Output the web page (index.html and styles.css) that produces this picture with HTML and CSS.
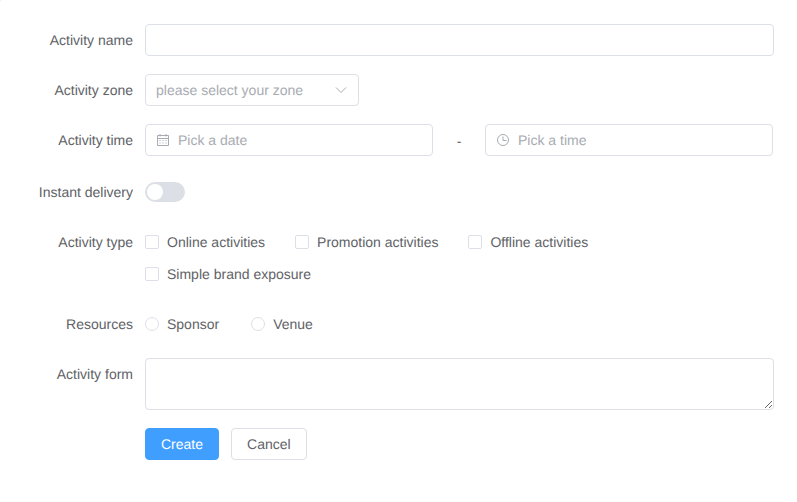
FILE: index.html
```html
<!DOCTYPE html>
<html lang="en">
<head>
<meta charset="utf-8">
<title>Activity form</title>
<link rel="stylesheet" href="styles.css">
</head>
<body>
<form class="form">
  <div class="row">
    <label class="label">Activity name</label>
    <div class="control"><div class="field"><input class="input" type="text"></div></div>
  </div>
  <div class="row">
    <label class="label">Activity zone</label>
    <div class="control">
      <div class="field field-select">
        <input class="input" type="text" placeholder="please select your zone" readonly>
        <svg class="chevron" viewBox="0 0 12 12" width="12" height="12"><path d="M1 3.500 6 8.500l5-5" fill="none" stroke="#a8abb2" stroke-width="1"/></svg>
      </div>
    </div>
  </div>
  <div class="row">
    <label class="label">Activity time</label>
    <div class="control control-time">
      <div class="field field-icon">
        <svg class="icon" viewBox="0 0 14 14" width="14" height="14"><path d="M1.500 2.500h11v10h-11zM1.500 5.500h11M4 1v2.500M10 1v2.500" fill="none" stroke="#a8abb2"/><path d="M3.500 7.500h1M6.500 7.500h1M9.500 7.500h1M3.500 10h1M6.500 10h1M9.500 10h1" fill="none" stroke="#a8abb2"/></svg>
        <input class="input" type="text" placeholder="Pick a date">
      </div>
      <span class="dash">-</span>
      <div class="field field-icon">
        <svg class="icon" viewBox="0 0 14 14" width="14" height="14"><circle cx="7" cy="7" r="5.500" fill="none" stroke="#a8abb2"/><path d="M7 3.500V7.500h3.500" fill="none" stroke="#a8abb2"/></svg>
        <input class="input" type="text" placeholder="Pick a time">
      </div>
    </div>
  </div>
  <div class="row row-switch">
    <label class="label">Instant delivery</label>
    <div class="control"><span class="switch"><span class="knob"></span></span></div>
  </div>
  <div class="row">
    <label class="label">Activity type</label>
    <div class="control options">
      <label class="option check"><span class="box"></span>Online activities</label>
      <label class="option check"><span class="box"></span>Promotion activities</label>
      <label class="option check"><span class="box"></span>Offline activities</label>
      <label class="option check"><span class="box"></span>Simple brand exposure</label>
    </div>
  </div>
  <div class="row">
    <label class="label">Resources</label>
    <div class="control options">
      <label class="option radio"><span class="box round"></span>Sponsor</label>
      <label class="option radio"><span class="box round"></span>Venue</label>
    </div>
  </div>
  <div class="row">
    <label class="label">Activity form</label>
    <div class="control"><textarea class="textarea"></textarea></div>
  </div>
  <div class="row">
    <span class="label"></span>
    <div class="control actions">
      <button class="btn btn-primary" type="button">Create</button>
      <button class="btn" type="button">Cancel</button>
    </div>
  </div>
</form>
</body>
</html>
```
FILE: styles.css
```css
* { box-sizing: border-box; }
html { background: #e6e6e6; }
html, body { margin: 0; height: 100%; }
body {
  background: #fff;
  border-top-left-radius: 2px;
  font-family: "Liberation Sans", Arial, sans-serif;
  font-size: 14px;
  color: #606266;
  text-rendering: geometricPrecision;
}
.form {
  display: flex;
  flex-direction: column;
  gap: 18px;
  padding: 24px 23px 0 0;
}
.row { display: flex; align-items: flex-start; }
.row-switch { padding-top: 2px; }
.label {
  width: 145px;
  flex: none;
  padding-right: 12px;
  text-align: right;
  line-height: 32px;
  color: #606266;
}
.control { flex: 1; min-width: 0; min-height: 32px; }
.field {
  display: flex;
  align-items: center;
  height: 32px;
  padding: 0 10px;
  border: 1px solid #dcdfe6;
  border-radius: 4px;
  background: #fff;
}
.field-select { width: 214px; }
.field-icon { gap: 8px; width: 288px; }
.input {
  flex: 1;
  min-width: 0;
  border: 0;
  padding: 0;
  outline: 0;
  height: 30px;
  font: inherit;
  text-rendering: geometricPrecision;
  color: #606266;
  background: transparent;
}
.input::placeholder { color: #a8abb2; opacity: 1; }
.chevron { flex: none; margin-right: 1px; }
.icon { flex: none; }
.control-time { display: flex; align-items: center; }
.dash { width: 52px; padding-top: 2px; text-align: center; color: #606266; }
.switch {
  display: block;
  width: 40px;
  height: 20px;
  margin-top: 6px;
  padding: 2px;
  border-radius: 10px;
  background: #dcdfe6;
}
.knob {
  display: block;
  width: 16px;
  height: 16px;
  border-radius: 50%;
  background: #fff;
}
.options { display: flex; flex-wrap: wrap; }
.option {
  display: flex;
  align-items: center;
  gap: 8px;
  height: 32px;
  color: #606266;
}
.check { margin-right: 30px; }
.radio { margin-right: 32px; }
.box {
  width: 14px;
  height: 14px;
  border: 1px solid #dcdfe6;
  border-radius: 2px;
  background: #fff;
}
.round { border-radius: 50%; }
.textarea {
  display: block;
  width: 100%;
  height: 52px;
  padding: 5px 11px;
  border: 1px solid #dcdfe6;
  border-radius: 4px;
  outline: 0;
  font: inherit;
  color: #606266;
  background: #fff;
}
.actions { display: flex; gap: 12px; }
.btn {
  height: 32px;
  padding: 0 15px;
  border: 1px solid #dcdfe6;
  border-radius: 4px;
  font: inherit;
  text-rendering: geometricPrecision;
  color: #606266;
  background: #fff;
}
.btn-primary {
  border-color: #409eff;
  color: #fff;
  background: #409eff;
}
```
